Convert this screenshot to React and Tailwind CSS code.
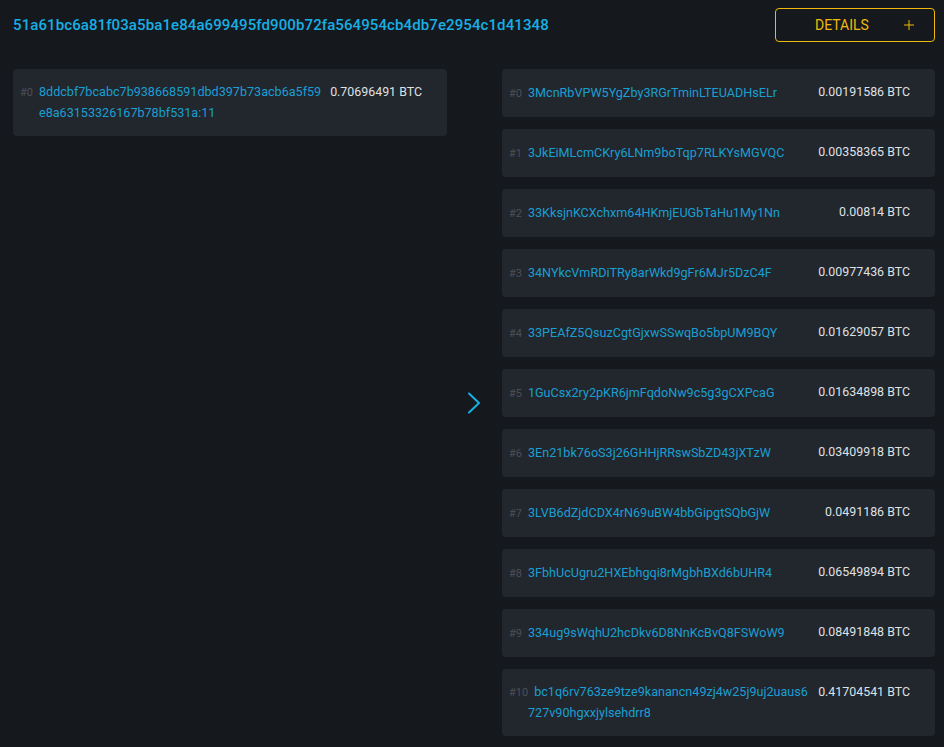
import { Plus } from 'lucide-react';

const txHash = '51a61bc6a81f03a5ba1e84a699495fd900b72fa564954cb4db7e2954c1d41348';

const inputs = [
  {
    addr: '8ddcbf7bcabc7b938668591dbd397b73acb6a5f59e8a63153326167b78bf531a:11',
    value: '0.70696491',
  },
];

const outputs = [
  { addr: '3McnRbVPW5YgZby3RGrTminLTEUADHsELr', value: '0.00191586' },
  { addr: '3JkEiMLcmCKry6LNm9boTqp7RLKYsMGVQC', value: '0.00358365' },
  { addr: '33KksjnKCXchxm64HKmjEUGbTaHu1My1Nn', value: '0.00814' },
  { addr: '34NYkcVmRDiTRy8arWkd9gFr6MJr5DzC4F', value: '0.00977436' },
  { addr: '33PEAfZ5QsuzCgtGjxwSSwqBo5bpUM9BQY', value: '0.01629057' },
  { addr: '1GuCsx2ry2pKR6jmFqdoNw9c5g3gCXPcaG', value: '0.01634898' },
  { addr: '3En21bk76oS3j26GHHjRRswSbZD43jXTzW', value: '0.03409918' },
  { addr: '3LVB6dZjdCDX4rN69uBW4bbGipgtSQbGjW', value: '0.0491186' },
  { addr: '3FbhUcUgru2HXEbhgqi8rMgbhBXd6bUHR4', value: '0.06549894' },
  { addr: '334ug9sWqhU2hcDkv6D8NnKcBvQ8FSWoW9', value: '0.08491848' },
  {
    addr: 'bc1q6rv763ze9tze9kanancn49zj4w25j9uj2uaus6727v90hgxxjylsehdrr8',
    value: '0.41704541',
  },
];

function IoRow({ index, addr, value }) {
  return (
    <div className="flex items-center min-h-[48px] py-[13px] pl-[7px] pr-[25px] bg-[#22262d] rounded text-[12.6px] leading-[20px]">
      <div className="flex-1 min-w-0 pl-[19px] break-all">
        <span className="inline-block -ml-[19px] mr-[6px] text-[11px] text-[#4a5059]">
          #{index}
        </span>
        <span className="text-[#1a9fd2]">{addr}</span>
      </div>
      <div className="w-[98px] shrink-0 self-start text-right text-[12.4px] text-[#dfe1e4] whitespace-nowrap">
        {value} BTC
      </div>
    </div>
  );
}

export default function App() {
  return (
    <div
      className="min-h-screen bg-[#15181d] pl-[13px] pr-[9px] pt-[8px] pb-[12px]"
      style={{ fontFamily: 'Roboto, "Liberation Sans", sans-serif' }}
    >
      {/* header */}
      <div className="flex items-center justify-between h-[34px]">
        <h1 className="text-[15px] font-medium text-[#17afe4] tracking-[0.1px] pt-[1px]">
          {txHash}
        </h1>
        <button className="flex items-center justify-between w-[160px] h-[34px] pl-[39px] pr-[17px] border border-[#f0b90b] rounded-sm text-[#f0b90b] text-[14px]">
          <span>DETAILS</span>
          <Plus size={16} strokeWidth={1.5} />
        </button>
      </div>

      {/* inputs / outputs */}
      <div className="flex mt-[27px]">
        <div className="w-[434px] shrink-0 flex flex-col gap-[12px]">
          {inputs.map((item, i) => (
            <IoRow key={i} index={i} addr={item.addr} value={item.value} />
          ))}
        </div>
        <div className="flex-1 flex items-center justify-center">
          <svg width="14" height="22" viewBox="0 0 14 22" fill="none" className="ml-[-2px]">
            <polyline
              points="2,1.5 12,11 2,20.5"
              stroke="#17afe4"
              strokeWidth="2"
              strokeLinecap="round"
              strokeLinejoin="round"
            />
          </svg>
        </div>
        <div className="w-[433px] shrink-0 flex flex-col gap-[12px]">
          {outputs.map((item, i) => (
            <IoRow key={i} index={i} addr={item.addr} value={item.value} />
          ))}
        </div>
      </div>
    </div>
  );
}
